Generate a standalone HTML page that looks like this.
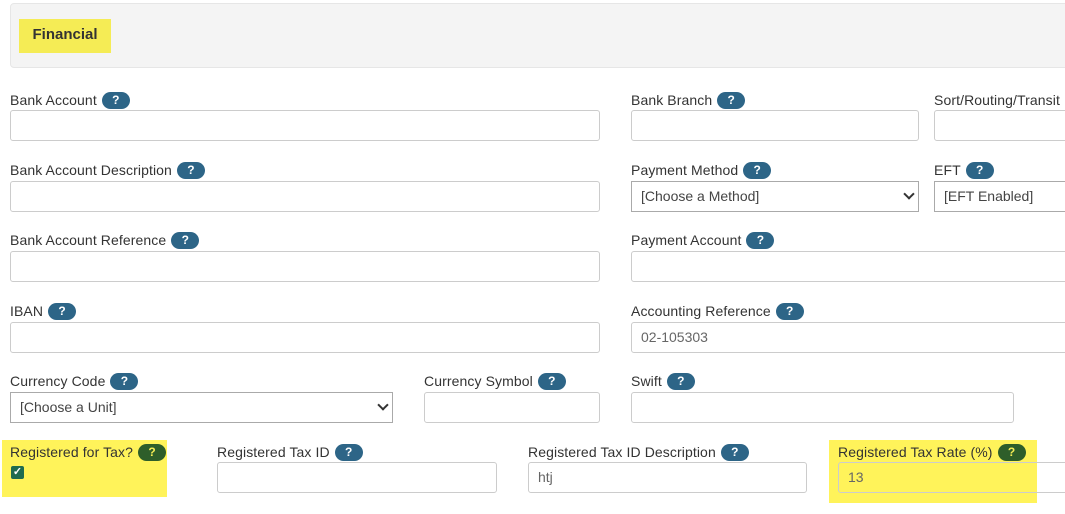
<!DOCTYPE html><html><head><style>
body{margin:0;width:1065px;height:514px;overflow:hidden;background:#fff;font-family:"Liberation Sans",sans-serif;position:relative}
.a{position:absolute}
.hdr{left:10px;top:3px;width:1070px;height:65px;background:#f4f4f4;border:1px solid #e6e6e6;border-radius:4px;box-sizing:border-box}
.fin{left:19px;top:19px;width:92px;height:34px;background:#f5ec55;font-weight:bold;font-size:15px;color:#333;line-height:32px;text-align:center}
.l{font-size:14px;color:#333;white-space:nowrap;line-height:16px;letter-spacing:0.1px}
.b{display:inline-block;width:28px;height:17px;border-radius:9px;background:#2d6587;color:#fff;font-weight:bold;font-size:12px;line-height:17px;text-align:center;vertical-align:top;margin-left:5px;margin-top:-0px}
.g{background:#2e5e2a;color:#f5ec55}
.i{height:31px;border:1px solid #ccc;border-radius:3px;box-sizing:border-box;background:#fff;font-size:14px;color:#666;padding-left:9px;line-height:29px}
.s{border-radius:0;border-color:#aaa;color:#444}
.c{position:absolute;right:5px;top:10px;width:6px;height:6px;border-right:2px solid #333;border-bottom:2px solid #333;transform:rotate(45deg);top:8px}
.y{background:#fff35a}
</style></head><body>
<div class="a hdr"></div><div class="a fin">Financial</div>

<div class="a l" style="left:10px;top:92px">Bank Account<span class="b">?</span></div>
<div class="a i" style="left:10px;top:110px;width:590px"></div>
<div class="a l" style="left:631px;top:92px">Bank Branch<span class="b">?</span></div>
<div class="a i" style="left:631px;top:110px;width:288px"></div>
<div class="a l" style="left:934px;top:92px">Sort/Routing/Transit</div>
<div class="a i" style="left:934px;top:110px;width:150px"></div>

<div class="a l" style="left:10px;top:162px">Bank Account Description<span class="b">?</span></div>
<div class="a i" style="left:10px;top:181px;width:590px"></div>
<div class="a l" style="left:631px;top:162px">Payment Method<span class="b">?</span></div>
<div class="a i s" style="left:631px;top:181px;width:288px">[Choose a Method]<span class="c"></span></div>
<div class="a l" style="left:934px;top:162px">EFT<span class="b">?</span></div>
<div class="a i s" style="left:934px;top:181px;width:150px">[EFT Enabled]</div>

<div class="a l" style="left:10px;top:232px">Bank Account Reference<span class="b">?</span></div>
<div class="a i" style="left:10px;top:251px;width:590px"></div>
<div class="a l" style="left:631px;top:232px">Payment Account<span class="b">?</span></div>
<div class="a i" style="left:631px;top:251px;width:450px"></div>

<div class="a l" style="left:10px;top:303px">IBAN<span class="b">?</span></div>
<div class="a i" style="left:10px;top:322px;width:590px"></div>
<div class="a l" style="left:631px;top:303px">Accounting Reference<span class="b">?</span></div>
<div class="a i" style="left:631px;top:322px;width:450px">02-105303</div>

<div class="a l" style="left:10px;top:373px">Currency Code<span class="b">?</span></div>
<div class="a i s" style="left:10px;top:392px;width:383px">[Choose a Unit]<span class="c"></span></div>
<div class="a l" style="left:424px;top:373px">Currency Symbol<span class="b">?</span></div>
<div class="a i" style="left:424px;top:392px;width:176px"></div>
<div class="a l" style="left:631px;top:373px">Swift<span class="b">?</span></div>
<div class="a i" style="left:631px;top:392px;width:383px"></div>

<div class="a y" style="left:2px;top:440px;width:165px;height:57px"></div>
<div class="a l" style="left:10px;top:444px">Registered for Tax?<span class="b g">?</span></div>
<div class="a" style="left:11px;top:466px;width:13px;height:13px;background:#1f6b4f;border-radius:2px;color:#fff;font-size:11px;line-height:13px;text-align:center;font-weight:bold">&#10003;</div>
<div class="a l" style="left:217px;top:444px">Registered Tax ID<span class="b">?</span></div>
<div class="a i" style="left:217px;top:462px;width:280px"></div>
<div class="a l" style="left:528px;top:444px">Registered Tax ID Description<span class="b">?</span></div>
<div class="a i" style="left:528px;top:462px;width:279px">htj</div>
<div class="a y" style="left:829px;top:440px;width:208px;height:63px"></div>
<div class="a l" style="left:838px;top:444px">Registered Tax Rate (%)<span class="b g">?</span></div>
<div class="a i" style="left:838px;top:462px;width:250px;background:transparent">13</div>
</body></html>
